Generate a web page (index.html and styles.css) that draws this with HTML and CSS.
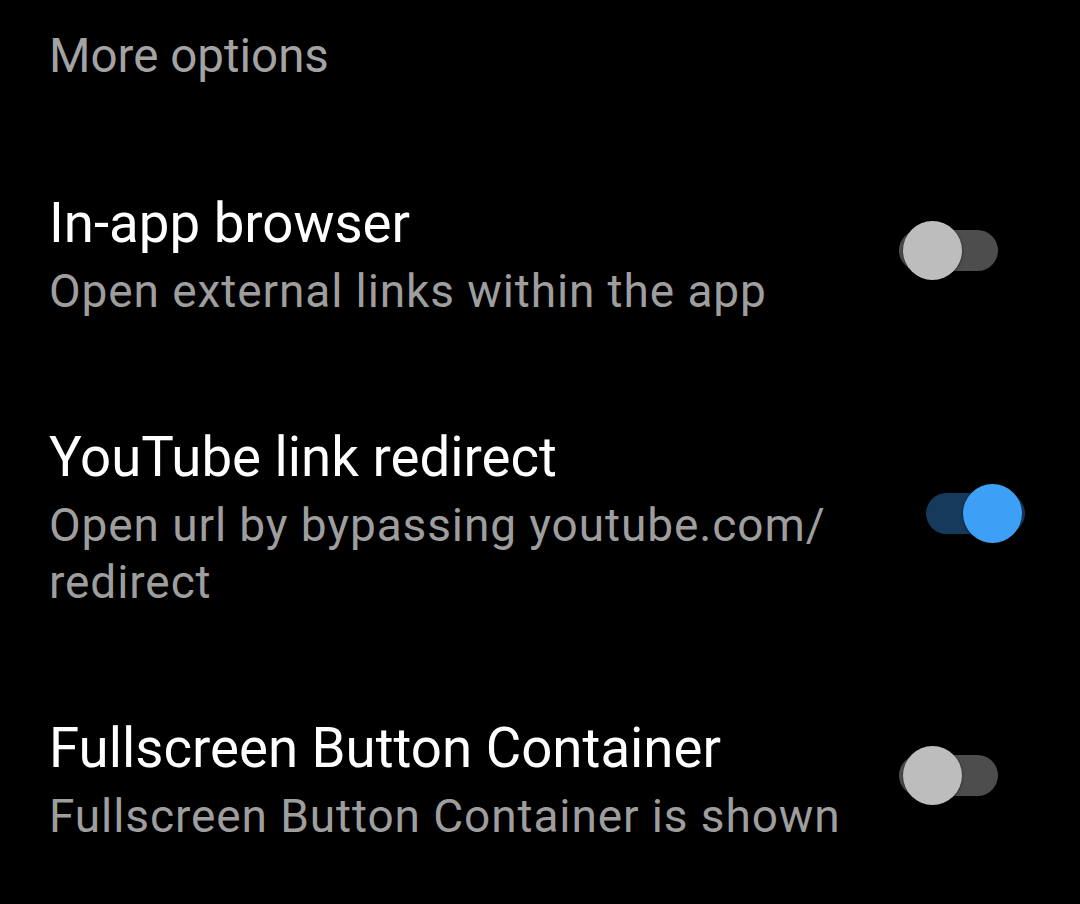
FILE: index.html
```html
<!DOCTYPE html>
<html lang="en">
<head>
    <meta charset="UTF-8">
    <meta name="viewport" content="width=device-width, initial-scale=1.0">
    <title>More options</title>
    <link rel="stylesheet" href="styles.css">
</head>
<body>
    <div class="settings">
        <div class="section-title">More options</div>

        <div class="setting-row">
            <div class="setting-text">
                <div class="setting-title">In-app browser</div>
                <div class="setting-summary">Open external links within the app</div>
            </div>
            <div class="switch"><span class="thumb"></span></div>
        </div>

        <div class="setting-row">
            <div class="setting-text">
                <div class="setting-title">YouTube link redirect</div>
                <div class="setting-summary">Open url by bypassing youtube.com/ redirect</div>
            </div>
            <div class="switch switch-on wide"><span class="thumb"></span></div>
        </div>

        <div class="setting-row">
            <div class="setting-text">
                <div class="setting-title">Fullscreen Button Container</div>
                <div class="setting-summary">Fullscreen Button Container is shown</div>
            </div>
            <div class="switch"><span class="thumb"></span></div>
        </div>
    </div>
</body>
</html>
```

FILE: styles.css
```css
body {
    margin: 0;
    background-color: #000;
    font-family: Roboto, "Noto Sans", sans-serif;
    width: 1080px;
    height: 904px;
    overflow: hidden;
}
.settings {
    padding: 28px 0 0 49px;
}
.section-title {
    font-size: 47.5px;
    line-height: 56px;
    color: #a3a3a3;
    margin-bottom: 55px;
}
.setting-row {
    display: flex;
    align-items: center;
    padding: 53px 0;
}
.setting-text {
    flex: 1;
    min-width: 0;
}
.setting-title {
    font-size: 54.6px;
    line-height: 62px;
    color: #fff;
    margin-bottom: 9px;
}
.setting-summary {
    font-size: 46px;
    line-height: 57px;
    letter-spacing: 0.9px;
    color: #9e9e9e;
    max-width: 800px;
}
.switch {
    position: relative;
    flex: none;
    width: 99px;
    height: 41px;
    border-radius: 21px;
    background-color: #4d4d4d;
    margin: 0 82px 11px 40px;
}
.switch .thumb {
    position: absolute;
    top: -9px;
    left: 4px;
    width: 59px;
    height: 59px;
    border-radius: 50%;
    background-color: #bdbdbd;
    box-shadow: 0 1px 3px rgba(0, 0, 0, 0.5);
}
.switch-on {
    background-color: #163a5c;
}
.switch-on .thumb {
    left: auto;
    right: 3px;
    background-color: #3d9ff5;
}
.switch.wide {
    margin-right: 55px;
}
```
